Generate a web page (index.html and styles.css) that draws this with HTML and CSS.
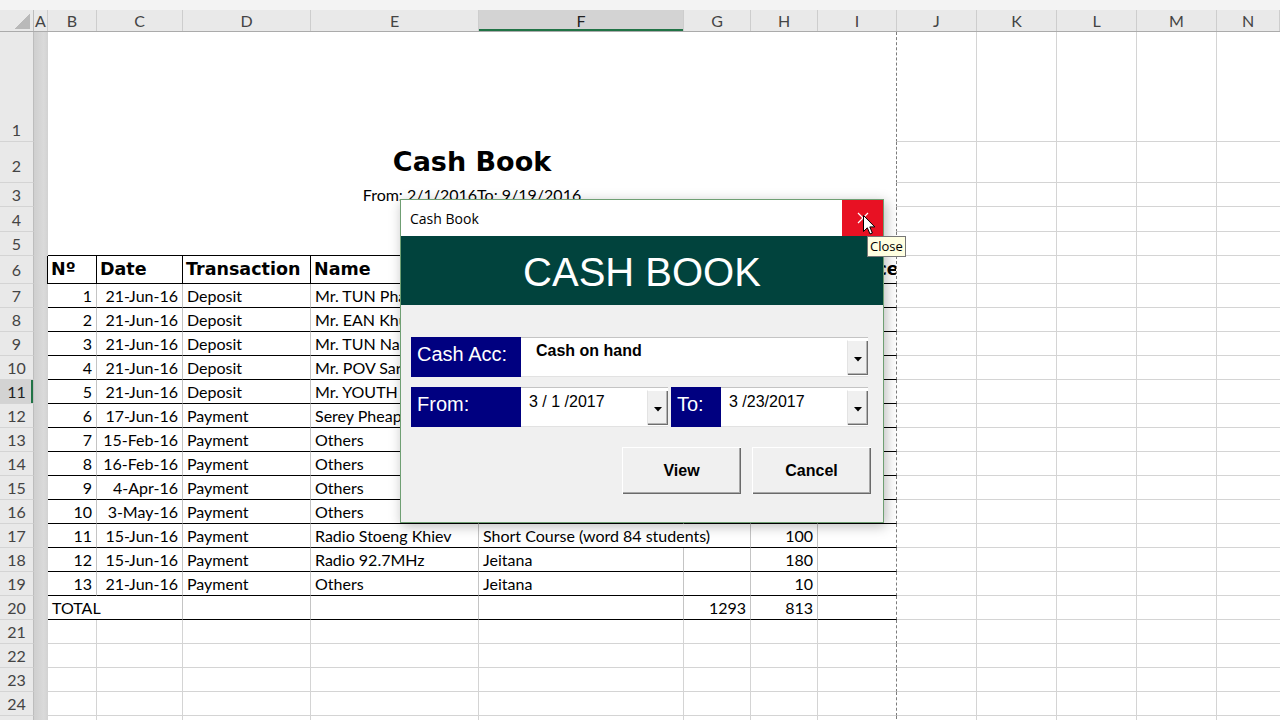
FILE: index.html
```html
<!DOCTYPE html>
<html>
<head>
<meta charset="utf-8">
<title>Cash Book</title>
<link rel="stylesheet" href="styles.css">
</head>
<body>
<div class="topstrip"></div>
<div class="sheet">
  <div class="row colhead">
    <div class="corner"></div><div>A</div><div>B</div><div>C</div><div>D</div><div>E</div><div class="sel">F</div><div>G</div><div>H</div><div>I</div><div>J</div><div>K</div><div>L</div><div>M</div><div>N</div>
  </div>
  <div class="row h110"><div class="rh">1</div><div class="ca"></div><div class="c span8"></div><div class="rest"></div></div>
  <div class="row h41"><div class="rh rh-title">2</div><div class="ca"></div><div class="c span8 title">Cash Book</div><div class="rest"></div></div>
  <div class="row"><div class="rh">3</div><div class="ca"></div><div class="c span8 sub">From: 2/1/2016To: 9/19/2016</div><div class="rest"></div></div>
  <div class="row h25"><div class="rh">4</div><div class="ca"></div><div class="c span8"></div><div class="rest"></div></div>
  <div class="row"><div class="rh">5</div><div class="ca"></div><div class="c span8 toprule"></div><div class="rest"></div></div>
  <div class="row h28"><div class="rh rh-head">6</div><div class="ca ca-edge"></div><div class="c th">Nº</div><div class="c th">Date</div><div class="c th">Transaction</div><div class="c th">Name</div><div class="c th"></div><div class="c th"></div><div class="c th"></div><div class="c th ci r">Balance</div><div class="rest"></div></div>

  <div class="row"><div class="rh">7</div><div class="ca"></div><div class="c t r">1</div><div class="c t r">21-Jun-16</div><div class="c t">Deposit</div><div class="c t">Mr. TUN Phalla</div><div class="c t"></div><div class="c t r"></div><div class="c t r"></div><div class="c t ci"></div><div class="rest"></div></div>
  <div class="row"><div class="rh">8</div><div class="ca"></div><div class="c t r">2</div><div class="c t r">21-Jun-16</div><div class="c t">Deposit</div><div class="c t">Mr. EAN Khun</div><div class="c t"></div><div class="c t r"></div><div class="c t r"></div><div class="c t ci"></div><div class="rest"></div></div>
  <div class="row"><div class="rh">9</div><div class="ca"></div><div class="c t r">3</div><div class="c t r">21-Jun-16</div><div class="c t">Deposit</div><div class="c t">Mr. TUN Nara</div><div class="c t"></div><div class="c t r"></div><div class="c t r"></div><div class="c t ci"></div><div class="rest"></div></div>
  <div class="row"><div class="rh">10</div><div class="ca"></div><div class="c t r">4</div><div class="c t r">21-Jun-16</div><div class="c t">Deposit</div><div class="c t">Mr. POV Sarin</div><div class="c t"></div><div class="c t r"></div><div class="c t r"></div><div class="c t ci"></div><div class="rest"></div></div>
  <div class="row"><div class="rh sel">11</div><div class="ca"></div><div class="c t r">5</div><div class="c t r">21-Jun-16</div><div class="c t">Deposit</div><div class="c t">Mr. YOUTH Sokha</div><div class="c t"></div><div class="c t r"></div><div class="c t r"></div><div class="c t ci"></div><div class="rest"></div></div>
  <div class="row"><div class="rh">12</div><div class="ca"></div><div class="c t r">6</div><div class="c t r">17-Jun-16</div><div class="c t">Payment</div><div class="c t">Serey Pheap</div><div class="c t"></div><div class="c t r"></div><div class="c t r"></div><div class="c t ci"></div><div class="rest"></div></div>
  <div class="row"><div class="rh">13</div><div class="ca"></div><div class="c t r">7</div><div class="c t r">15-Feb-16</div><div class="c t">Payment</div><div class="c t">Others</div><div class="c t"></div><div class="c t r"></div><div class="c t r"></div><div class="c t ci"></div><div class="rest"></div></div>
  <div class="row"><div class="rh">14</div><div class="ca"></div><div class="c t r">8</div><div class="c t r">16-Feb-16</div><div class="c t">Payment</div><div class="c t">Others</div><div class="c t"></div><div class="c t r"></div><div class="c t r"></div><div class="c t ci"></div><div class="rest"></div></div>
  <div class="row"><div class="rh">15</div><div class="ca"></div><div class="c t r">9</div><div class="c t r">4-Apr-16</div><div class="c t">Payment</div><div class="c t">Others</div><div class="c t"></div><div class="c t r"></div><div class="c t r"></div><div class="c t ci"></div><div class="rest"></div></div>
  <div class="row"><div class="rh">16</div><div class="ca"></div><div class="c t r">10</div><div class="c t r">3-May-16</div><div class="c t">Payment</div><div class="c t">Others</div><div class="c t"></div><div class="c t r"></div><div class="c t r"></div><div class="c t ci"></div><div class="rest"></div></div>
  <div class="row"><div class="rh">17</div><div class="ca"></div><div class="c t r">11</div><div class="c t r">15-Jun-16</div><div class="c t">Payment</div><div class="c t">Radio Stoeng Khiev</div><div class="c t span2">Short Course (word 84 students)</div><div class="c t r">100</div><div class="c t ci"></div><div class="rest"></div></div>
  <div class="row"><div class="rh">18</div><div class="ca"></div><div class="c t r">12</div><div class="c t r">15-Jun-16</div><div class="c t">Payment</div><div class="c t">Radio 92.7MHz</div><div class="c t">Jeitana</div><div class="c t r"></div><div class="c t r">180</div><div class="c t ci"></div><div class="rest"></div></div>
  <div class="row"><div class="rh">19</div><div class="ca"></div><div class="c t r">13</div><div class="c t r">21-Jun-16</div><div class="c t">Payment</div><div class="c t">Others</div><div class="c t">Jeitana</div><div class="c t r"></div><div class="c t r">10</div><div class="c t ci"></div><div class="rest"></div></div>
  <div class="row"><div class="rh">20</div><div class="ca"></div><div class="c t span2">TOTAL</div><div class="c t"></div><div class="c t"></div><div class="c t"></div><div class="c t r">1293</div><div class="c t r">813</div><div class="c t ci"></div><div class="rest"></div></div>

  <div class="row"><div class="rh">21</div><div class="ca"></div><div class="c"></div><div class="c"></div><div class="c"></div><div class="c"></div><div class="c"></div><div class="c"></div><div class="c"></div><div class="c ci"></div><div class="rest"></div></div>
  <div class="row"><div class="rh">22</div><div class="ca"></div><div class="c"></div><div class="c"></div><div class="c"></div><div class="c"></div><div class="c"></div><div class="c"></div><div class="c"></div><div class="c ci"></div><div class="rest"></div></div>
  <div class="row"><div class="rh">23</div><div class="ca"></div><div class="c"></div><div class="c"></div><div class="c"></div><div class="c"></div><div class="c"></div><div class="c"></div><div class="c"></div><div class="c ci"></div><div class="rest"></div></div>
  <div class="row"><div class="rh">24</div><div class="ca"></div><div class="c"></div><div class="c"></div><div class="c"></div><div class="c"></div><div class="c"></div><div class="c"></div><div class="c"></div><div class="c ci"></div><div class="rest"></div></div>
  <div class="row"><div class="rh">25</div><div class="ca"></div><div class="c"></div><div class="c"></div><div class="c"></div><div class="c"></div><div class="c"></div><div class="c"></div><div class="c"></div><div class="c ci"></div><div class="rest"></div></div>
</div>

<div class="dialog">
  <div class="titlebar">
    <span class="wtitle">Cash Book</span>
    <div class="close">
      <svg width="12" height="12" viewBox="0 0 12 12"><path d="M1 1 L11 11 M11 1 L1 11" stroke="#fff" stroke-width="1.2" fill="none"/></svg>
    </div>
  </div>
  <div class="banner">CASH BOOK</div>
  <div class="dbody">
    <div class="frow">
      <div class="lbl lbl-wide">Cash Acc:</div>
      <div class="field field-acc">
        <span class="val val-bold">Cash on hand</span>
        <div class="drop"><svg width="8" height="5" viewBox="0 0 8 5"><path d="M0 0 H8 L4 4.5 Z" fill="#000"/></svg></div>
      </div>
    </div>
    <div class="frow">
      <div class="lbl lbl-wide">From:</div>
      <div class="field field-date">
        <span class="val val-date">3 / 1 /2017</span>
        <div class="drop"><svg width="8" height="5" viewBox="0 0 8 5"><path d="M0 0 H8 L4 4.5 Z" fill="#000"/></svg></div>
      </div>
      <div class="lbl lbl-narrow">To:</div>
      <div class="field field-date">
        <span class="val val-date">3 /23/2017</span>
        <div class="drop"><svg width="8" height="5" viewBox="0 0 8 5"><path d="M0 0 H8 L4 4.5 Z" fill="#000"/></svg></div>
      </div>
    </div>
    <div class="buttons">
      <button class="btn">View</button>
      <button class="btn">Cancel</button>
    </div>
  </div>
</div>

<div class="tooltip">Close</div>
<svg class="cursor" width="13" height="20" viewBox="0 0 13 20"><path d="M0.5 0.5 L0.5 16.5 L4.3 12.8 L7 19 L9.4 18 L6.8 11.9 L11.8 11.9 Z" fill="#fff" stroke="#000" stroke-width="1" stroke-linejoin="round"/></svg>
</body>
</html>
```
FILE: styles.css
```css
:root {
  --cols: 34px 14px 49px 86px 128px 168px 205px 67px 67px 79px 80px 80px 80px 80px 63px;
  --grid: #d4d4d4;
}
html, body { margin: 0; padding: 0; }
body {
  width: 1280px;
  height: 720px;
  overflow: hidden;
  background: #fff;
  font-family: Lato, "Liberation Sans", sans-serif;
  font-size: 16px;
  color: #000;
  position: relative;
}
.topstrip { height: 10px; background: #f3f3f3; }

.row {
  display: grid;
  grid-template-columns: var(--cols);
  height: 24px;
}
.row > div { box-sizing: border-box; overflow: hidden; white-space: nowrap; }
.h110 { height: 110px; }
.h41 { height: 41px; }
.h25 { height: 25px; }
.h28 { height: 28px; }

/* column header */
.colhead {
  height: 22px;
  background: #e9e9e9;
  border-bottom: 1px solid #ababab;
  box-sizing: border-box;
}
.colhead > div {
  text-align: center;
  line-height: 21px;
  color: #444;
  border-right: 1px solid #cdcdcd;
}
.colhead .corner {
  background: linear-gradient(135deg, transparent 50%, #b9b9b9 50%) no-repeat right 3px bottom 2px / 15px 15px, #e9e9e9;
  border-right: 1px solid #bdbdbd;
}
.colhead .sel {
  background: #d3d3d3;
  color: #222;
  box-shadow: inset 0 -2px 0 #217346;
}

/* row header */
.rh {
  background: #e9e9e9;
  color: #444;
  line-height: 23px;
  border-bottom: 1px solid #d4d4d4;
  border-right: 1px solid #bdbdbd;
  display: flex;
  align-items: flex-end;
  justify-content: center;
}
.rh.sel { background: #d3d3d3; color: #222; box-shadow: inset -2px 0 0 #217346; }
.rh-title { padding-bottom: 5px; }
.rh-head { line-height: 27px; }

.ca { background: linear-gradient(to right, #cfcfcf, #dadada 70%, #d2d2d2); }
.ca-edge { border-right: 1px solid #000; }

/* cells */
.c {
  border-right: 1px solid var(--grid);
  border-bottom: 1px solid var(--grid);
  line-height: 23px;
  padding: 0 4px;
}
.c.ci { border-right: 1px dashed #7c7c7c; }
.t { border-bottom-color: #000; border-right-color: #c4c4c4; }
.r { text-align: right; }
.span2 { grid-column: span 2; }
.span8 { grid-column: span 8; border-right: 1px dashed #7c7c7c; border-bottom-color: transparent; }
.span8.toprule { border-bottom: 1px solid #000; }
.title {
  font-family: "DejaVu Sans", sans-serif;
  font-weight: bold;
  font-size: 27px;
  text-align: center;
  line-height: 40px;
}
.sub { text-align: center; }
.th {
  font-family: "DejaVu Sans", sans-serif;
  font-weight: bold;
  font-size: 17.5px;
  line-height: 27px;
  border-bottom: 1px solid #000;
  border-right: 1px solid #000;
  padding: 0 3px;
}
.th.ci { padding-right: 4px; }
.rest {
  grid-column: span 5;
  border-bottom: 1px solid var(--grid);
  background: repeating-linear-gradient(to right, transparent 0 79px, var(--grid) 79px 80px);
}

/* dialog */
.dialog {
  position: absolute;
  left: 400px;
  top: 199px;
  width: 484px;
  height: 324px;
  box-sizing: border-box;
  border: 1px solid #6f9f73;
  background: #f0f0f0;
  box-shadow: 2px 3px 12px rgba(0, 0, 0, 0.28);
  display: flex;
  flex-direction: column;
  font-family: "Liberation Sans", Arial, sans-serif;
}
.titlebar {
  height: 36px;
  background: #fff;
  display: flex;
  align-items: center;
  justify-content: space-between;
}
.wtitle {
  font-family: "Open Sans", sans-serif;
  font-size: 14px;
  padding-left: 9px;
  color: #000;
}
.close {
  width: 41px;
  height: 36px;
  background: #e81123;
  display: flex;
  align-items: center;
  justify-content: center;
}
.banner {
  height: 69px;
  background: #01433d;
  color: #fff;
  font-size: 40px;
  line-height: 72px;
  text-align: center;
}
.dbody {
  flex: 1;
  padding: 32px 0 0 10px;
  display: flex;
  flex-direction: column;
  gap: 10px;
}
.frow { display: flex; height: 40px; }
.lbl {
  background: #000080;
  color: #fff;
  font-size: 20px;
  line-height: 23px;
  padding: 6px 0 0 6px;
  box-sizing: border-box;
}
.lbl-wide { width: 110px; }
.lbl-narrow { width: 50px; margin-left: 3px; }
.field {
  background: #fff;
  border-top: 1px solid #c4c4c4;
  border-bottom: 1px solid #e2e2e2;
  box-sizing: border-box;
  display: flex;
  justify-content: space-between;
}
.field-acc { width: 347px; }
.field-date { width: 147px; }
.val { line-height: 18px; }
.val-bold { font-weight: bold; font-size: 16px; padding: 4px 0 0 15px; }
.val-date { font-size: 16px; padding: 5px 0 0 8px; }
.drop {
  width: 21px;
  margin: 2px 0 1px;
  background: #f0f0f0;
  border-left: 1px solid #e3e3e3;
  border-top: 1px solid #fff;
  box-shadow: inset -1px -1px 0 #6e6e6e, inset -2px -2px 0 #b4b4b4;
  box-sizing: border-box;
  display: flex;
  align-items: center;
  justify-content: center;
  padding-top: 2px;
}
.buttons {
  display: flex;
  justify-content: flex-end;
  gap: 11px;
  padding-right: 12px;
  margin-top: 10px;
}
.btn {
  width: 119px;
  height: 47px;
  background: #f0f0f0;
  border: none;
  box-shadow: inset 1px 1px 0 #fff, inset -1px -1px 0 #6a6a6a, inset -2px -2px 0 #a8a8a8;
  font-family: "Liberation Sans", Arial, sans-serif;
  font-weight: bold;
  font-size: 16px;
  color: #000;
  padding: 0;
}

.tooltip {
  position: absolute;
  left: 867px;
  top: 236px;
  width: 39px;
  height: 21px;
  box-sizing: border-box;
  background: #ffffe1;
  border: 1px solid #767676;
  font-family: "Open Sans", sans-serif;
  font-size: 13px;
  line-height: 19px;
  padding-left: 2px;
  color: #000;
}
.cursor {
  position: absolute;
  left: 863px;
  top: 215px;
}
```
